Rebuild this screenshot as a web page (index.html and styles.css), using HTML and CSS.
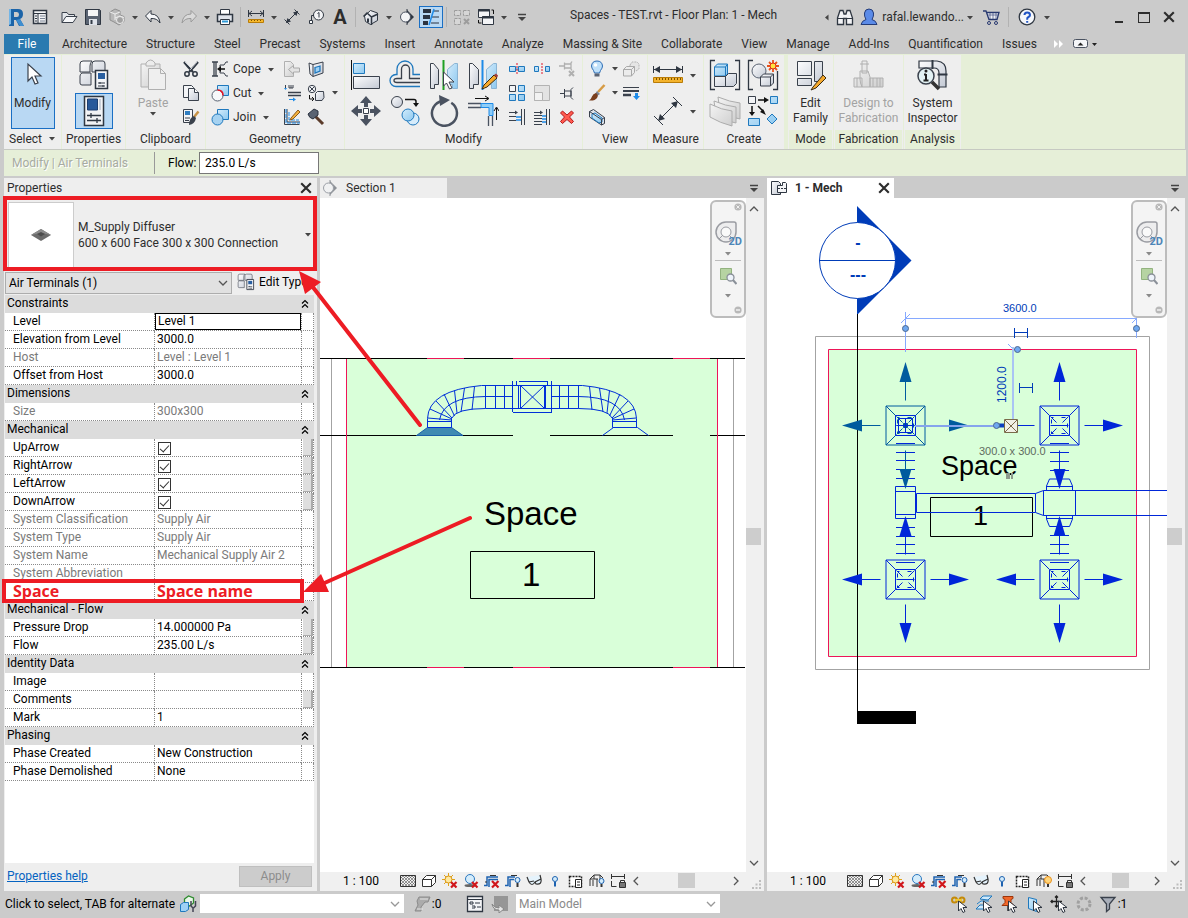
FILE: index.html
```html
<!DOCTYPE html>
<html lang="en">
<head>
    <meta charset="UTF-8">
    <meta name="viewport" content="width=device-width, initial-scale=1.0">
    <title>Spaces - TEST.rvt - Floor Plan: 1 - Mech</title>
    <link rel="stylesheet" href="styles.css">
</head>
<body>

    <!-- icon sprite -->
    <svg class="sprite" aria-hidden="true">
        <defs>
            <linearGradient id="steel" x1="0" y1="0" x2="1" y2="1">
                <stop offset="0" stop-color="#fdfdfe"/>
                <stop offset="1" stop-color="#c3c9d4"/>
            </linearGradient>
            <linearGradient id="sky" x1="0" y1="0" x2="1" y2="1">
                <stop offset="0" stop-color="#d4ecfb"/>
                <stop offset="1" stop-color="#8cc8f0"/>
            </linearGradient>
            <linearGradient id="pale" x1="0" y1="0" x2="1" y2="1">
                <stop offset="0" stop-color="#f4f4f4"/>
                <stop offset="1" stop-color="#cfcfcf"/>
            </linearGradient>
        </defs>

        <!-- quick access, 18x18 -->
        <symbol id="logo" viewBox="0 0 18 18"><path d="M2 1h9q5 0 5 5 0 4-3 5l4 7h-5L9 12H7v6H2z" fill="#1c64a8"/><path d="M7 4h3q2 0 2 2.500t-2 2.500H7z" fill="#cbcbcb"/><path d="M2 1h2v15l-2 1z" fill="#74b5e6"/><path d="M9 12l4 6h4l-4-7z" fill="#3f8ed0"/></symbol>
        <symbol id="home" viewBox="0 0 18 18"><path d="M2.500 2.500h13v13h-13z" fill="#f3f4f6" stroke="#2f3742" stroke-width="1.500"/><path d="M2.500 5.500h13M7 6v9" stroke="#2f3742"/><path d="M4 8h2M4 10.500h2M4 13h2" stroke="#2f3742"/><path d="M9 8h5M9 10.500h5M9 13h5" stroke="#7a8494"/></symbol>
        <symbol id="open" viewBox="0 0 18 18"><path d="M2 14.500V4.500h5l1.500 2h6v2" fill="#e3e6ea" stroke="#3a414c"/><path d="M2 14.500l4-6h11l-4 6z" fill="#f6f7f9" stroke="#3a414c"/></symbol>
        <symbol id="save" viewBox="0 0 18 18"><path d="M1.500 1.500h14l1 1v14h-15z" fill="#5a6372" stroke="#2f3742"/><path d="M4 2h10v6H4z" fill="#f4f5f7"/><path d="M5 11h8v6H5z" fill="#dfe3ea"/><path d="M6.500 12h2v4h-2z" fill="#333b47"/></symbol>
        <symbol id="cloud" viewBox="0 0 18 18"><path d="M7 1l5 2v4l4 1.500v5L11 17l-5-3-4-2V4z" fill="#b9b9b9" stroke="#909090"/><path d="M7 6l5-2M7 6v6M2 4l5 2M7 10l5-2 4 1.500" stroke="#efefef" fill="none"/><circle cx="12" cy="12" r="3.500" fill="#a2a2a2" stroke="#eee"/></symbol>
        <symbol id="undo" viewBox="0 0 18 18"><path d="M7 2.500v3.500q8 0 9 9-3-5-9-4.500V14L1.500 8z" fill="#f5f6f8" stroke="#2f3742"/></symbol>
        <symbol id="redo" viewBox="0 0 18 18"><path d="M11 2.500v3.500q-8 0-9 9 3-5 9-4.500V14l5.500-6z" fill="#dadada" stroke="#9a9a9a"/></symbol>
        <symbol id="print" viewBox="0 0 18 18"><path d="M4.500 7V1.500h9V7" fill="#fff" stroke="#2f3742"/><path d="M1.500 6.500h15v7h-15z" fill="#dfe3ea" stroke="#2f3742" stroke-width="1.500"/><path d="M4.500 11.500h9v5h-9z" fill="#fff" stroke="#2f3742"/><path d="M6 13.500h6" stroke="#2f9ad8" stroke-width="2"/></symbol>
        <symbol id="measure" viewBox="0 0 18 18"><path d="M2 5.500h14M5 3L2 5.500 5 8M13 3l3 2.500L13 8M1.500 2v7M16.500 2v7" fill="none" stroke="#2f3742"/><path d="M1.500 11.500h15v3h-15z" fill="#f7b92c" stroke="#b97c08"/><path d="M4.500 12v1M7.500 12v1M10.500 12v1M13.500 12v1" stroke="#7c5200"/></symbol>
        <symbol id="aligned" viewBox="0 0 18 18"><path d="M3.500 14.500l11-11M1.500 11.500l5 5M11.500 1.500l5 5" stroke="#2f3742" fill="none"/><path d="M3 15l1.500-5L8 13.500zM15 3l-5 1.500L13.500 8z" fill="#2f3742"/></symbol>
        <symbol id="tag" viewBox="0 0 18 18"><circle cx="11.500" cy="7" r="5" fill="#f3f4f6" stroke="#2f3742"/><path d="M10.500 5.500l1.500-1v5M4.500 12V7.500H7" fill="none" stroke="#2f3742"/><path d="M2.500 12.500h3v3h-3z" fill="#fff" stroke="#2f3742"/></symbol>
        <symbol id="house" viewBox="0 0 18 18"><path d="M2.500 8l6-5.500 7 2.500v7.500l-7 4-5-3z" fill="url(#steel)" stroke="#2f3742"/><path d="M1.500 8.500L5 5l4.500 4v8M9.500 9L16 6" fill="none" stroke="#2f3742" stroke-width="1.500"/><path d="M5 10.500h2v4H5z" fill="#2f3742"/></symbol>
        <symbol id="section" viewBox="0 0 18 18"><path d="M9 2l7 7-7 7z" fill="#2f3742"/><circle cx="7.500" cy="9" r="5" fill="#f3f4f6" stroke="#4a5260"/><path d="M9 1v3M9 14v3" stroke="#2f3742"/></symbol>
        <symbol id="thin" viewBox="0 0 18 18"><path d="M1 3h8M1 9h7M1 15h5" stroke="#2b3340" stroke-width="4"/><path d="M11 3h6M10 9h7M9 15h8" stroke="#2b3340"/><path d="M12 1L7 17" stroke="#1e8be8" stroke-width="1.500"/></symbol>
        <symbol id="hidden" viewBox="0 0 18 18"><path d="M1.500 2.500h6v5h-6zM10.500 2.500h6v5h-6zM1.500 10.500h6v6h-6z" fill="#d6d6d6" stroke="#9c9c9c" stroke-dasharray="3 1"/><path d="M11 11l5 5M16 11l-5 5" stroke="#9c9c9c" stroke-width="2"/></symbol>
        <symbol id="switch" viewBox="0 0 18 18"><path d="M1.500 1.500h11v8h-11zM5.500 8.500h11v8h-11z" fill="#f3f4f6" stroke="#2f3742"/><path d="M1 2.500h12M5 9.500h12" stroke="#2f3742" stroke-width="2"/><path d="M14.500 2h2v4M1.500 12v3h3" stroke="#111" fill="none"/></symbol>
        <symbol id="custom" viewBox="0 0 18 18"><path d="M5 6.500h8" stroke="#444" stroke-width="1.500"/><path d="M5 9h8l-4 4z" fill="#444"/></symbol>
        <symbol id="binoc" viewBox="0 0 18 18"><path d="M1.500 10L4 2.500h3L8 6h2l1-3.500h3L16.500 10v6.500h-6v-6h-3v6h-6z" fill="#f2f3f5" stroke="#2f3742" stroke-width="1.300"/><path d="M2 10.500h5M11 10.500h5" stroke="#2f3742"/></symbol>
        <symbol id="user" viewBox="0 0 18 18"><path d="M1 16.500q1-4 5-5Q4 8 4.500 5 5 1 9 1t4.500 4q.500 3-1.500 6.500 4 1 5 5z" fill="#5b8be8" stroke="#243c78"/></symbol>
        <symbol id="cart" viewBox="0 0 18 18"><path d="M1 3h3l3 8.500h8l2-7H5" fill="#eef0f5" stroke="#27386f" stroke-width="1.300"/><circle cx="7" cy="15" r="1.500" fill="none" stroke="#27386f"/><circle cx="14" cy="15" r="1.500" fill="none" stroke="#27386f"/><path d="M6 7h10M8 5v6M11 5v6M14 5v6" stroke="#27386f" stroke-width=".6"/></symbol>
        <symbol id="help" viewBox="0 0 18 18"><circle cx="9" cy="9" r="7.800" fill="#f5f7fb" stroke="#2f3742" stroke-width="1.300"/><path d="M6.500 7q0-2.500 2.700-2.500T12 7q0 1.300-1.500 2T9.200 11v.8M9.200 13v1.800" fill="none" stroke="#2255c4" stroke-width="2"/></symbol>
        <symbol id="down" viewBox="0 0 8 5"><path d="M1 1h6L4 4.500z" fill="#444"/></symbol>
        <symbol id="chev" viewBox="0 0 10 6"><path d="M1 1l4 4 4-4" fill="none" stroke="#555" stroke-width="1.300"/></symbol>
        <symbol id="x" viewBox="0 0 10 10"><path d="M1 1l8 8M9 1L1 9" stroke="#2d2d2d" stroke-width="1.800"/></symbol>

        <!-- ribbon, small -->
        <symbol id="cutout" viewBox="0 0 18 18"><path d="M2 2q4 5 9 10M16 2Q12 7 7 12" stroke="#2f3742" stroke-width="2.200" fill="none"/><path d="M3 2q4 4 7 7M15 2l-7 8" stroke="#dfe3ea" stroke-width=".8"/><circle cx="5" cy="14" r="2.200" fill="none" stroke="#2f3742" stroke-width="1.500"/><circle cx="13" cy="14" r="2.200" fill="none" stroke="#2f3742" stroke-width="1.500"/></symbol>
        <symbol id="copydoc" viewBox="0 0 18 18"><path d="M1.500 1.500h8l2 2v10h-10z" fill="#f4f5f7" stroke="#3a414c"/><path d="M6.500 4.500h6l4 4v8h-10z" fill="url(#steel)" stroke="#3a414c"/><path d="M12.500 4.500v4h4" fill="#fff" stroke="#3a414c"/></symbol>
        <symbol id="matchtype" viewBox="0 0 18 18"><path d="M1.500 1.500h9v13h-9z" fill="#f4f5f7" stroke="#3a414c"/><path d="M3 3h5v4H3z" fill="#2f7dc0"/><path d="M3 10h5M3 12.500h4" stroke="#3a414c"/><path d="M16.500 3.500L12 9" stroke="#c79246" stroke-width="2.500"/><path d="M12 8l2 2q-1 6-7 7 0-7 5-9z" fill="#3a414c"/></symbol>
        <symbol id="cope" viewBox="0 0 18 18"><path d="M1 2h6M1 16h6M3 2v14M5 2v14" stroke="#3a414c" stroke-width="1.300"/><path d="M17 2h-2l-2 3H9v2M17 16h-2l-2-3H9v-2" stroke="#3a414c" fill="none"/><path d="M14 9H8" stroke="#111" stroke-width="1.500"/><path d="M6 9l4-3v6z" fill="#111"/></symbol>
        <symbol id="cutgeo" viewBox="0 0 18 18"><path d="M6.500 1.500h11v10h-11z" fill="url(#sky)" stroke="#1f78bd"/><circle cx="6.500" cy="11.500" r="5.500" fill="#f7f8fa" stroke="#596271"/><path d="M6.500 6q5.500 0 5.500 5.500" stroke="#e81123" stroke-width="1.500" fill="none"/></symbol>
        <symbol id="joingeo" viewBox="0 0 18 18"><path d="M6.500 1.500h11v10h-11z" fill="url(#sky)" stroke="#1f78bd"/><circle cx="6.500" cy="11.500" r="5.500" fill="#a6d2f1" stroke="#1f78bd"/></symbol>
        <symbol id="joinends" viewBox="0 0 18 18"><path d="M1.500 1.500h6l3 3v12h-9z" fill="url(#pale)" stroke="#b0b0b0"/><path d="M5.500 9.500l5-4v2.500h6v4h-6v2z" fill="#e3e3e3" stroke="#a9a9a9"/></symbol>
        <symbol id="walljoin" viewBox="0 0 18 18"><path d="M2 3l4 1.500L16 2v11L6 16.500 3 14z" fill="url(#steel)" stroke="#3a414c"/><path d="M6 4.500v12" stroke="#3a414c" fill="none"/><path d="M8 7.500l5-1.500v5l-5 2z" fill="#9ed1f5" stroke="#1f78bd" stroke-width="1.300"/></symbol>
        <symbol id="beam" viewBox="0 0 18 18"><path d="M2.500 1v4M6 1v3h4V1M8 1v3" stroke="#3a414c" fill="none"/><path d="M1 4l1.500 2L4 4z" fill="#1e8be8"/><path d="M5 8.500h13M5 11.500h13" stroke="#3a414c" stroke-width="1.500"/><path d="M6 15.500h5" stroke="#1e8be8"/><path d="M10 13.500l3 2-3 2z" fill="#1e8be8"/></symbol>
        <symbol id="paint" viewBox="0 0 18 18"><circle cx="5" cy="5" r="3.700" fill="#eef0f3" stroke="#3a414c"/><path d="M2.500 2.500l5 5M7.500 2.500l-5 5" stroke="#3a414c"/><path d="M8.500 9.500l2-2h6l.500 6-2 3h-6.500z" fill="url(#steel)" stroke="#3a414c"/><path d="M2.500 11v4h4M5 13l2 2-2 2" stroke="#111" fill="none"/></symbol>
        <symbol id="wallopen" viewBox="0 0 18 18"><path d="M1.500 1v15.500h15M4 1v13h13" stroke="#3a414c" fill="none"/><path d="M3 1v14h14M6 4v8h10" stroke="#1e8be8" fill="none" stroke-dasharray="4 1"/><path d="M8 10L15 2l2 2-7 7-3 1z" fill="#f3b03c" stroke="#8a5a1c"/></symbol>
        <symbol id="hammer" viewBox="0 0 18 18"><path d="M7 7l9 9" stroke="#5b3b2a" stroke-width="3"/><path d="M1 6l6-5 4 2v4l-5 4q-4-1-5-5z" fill="#5a6372" stroke="#2b3340"/></symbol>
        <symbol id="split" viewBox="0 0 18 18"><path d="M1.500 6.500h6v5h-6zM10.500 6.500h6v5h-6z" fill="url(#sky)" stroke="#1f78bd"/><path d="M7.500 9h3" stroke="#1f78bd"/><path d="M9 3v12" stroke="#e0162b" stroke-dasharray="2 1"/></symbol>
        <symbol id="splitgap" viewBox="0 0 18 18"><path d="M1.500 6.500h4v5h-4zM12.500 6.500h4v5h-4z" fill="url(#sky)" stroke="#1f78bd"/><path d="M9 3v12" stroke="#e0162b" stroke-dasharray="2 1"/></symbol>
        <symbol id="unpin" viewBox="0 0 18 18"><path d="M1 6h5M6.500 2.500v7M7 4h6v4H7M14 1.500L13 3v6l1 1.500" stroke="#b0b0b0" stroke-width="1.300" fill="none"/><path d="M11 11l5 5M16 11l-5 5" stroke="#b0b0b0" stroke-width="2"/></symbol>
        <symbol id="pin" viewBox="0 0 18 18"><path d="M2 9.500h4M6.500 5v9M7 7h6v5H7M15 3.500L13 5.500v8l2 2" stroke="#3a414c" fill="none"/></symbol>
        <symbol id="array" viewBox="0 0 18 18"><path d="M1.500 1.500h6v6h-6z" fill="#f3f4f6" stroke="#3a414c"/><path d="M10.500 1.500h6v6h-6zM1.500 10.500h6v6h-6zM10.500 10.500h6v6h-6z" fill="url(#sky)" stroke="#1f78bd"/></symbol>
        <symbol id="scale" viewBox="0 0 18 18"><path d="M1.500 1.500h15v15h-15z" fill="#e3e3e3" stroke="#b3b3b3"/><path d="M1.500 8.500h8v8h-8z" fill="#f2f2f2" stroke="#b3b3b3"/></symbol>
        <symbol id="trim1" viewBox="0 0 18 18"><path d="M1 8.500h7M1 12.500h7M13.500 1v16M16.500 1v16" stroke="#3a414c"/><path d="M8 9h5M8 12h5" stroke="#1e8be8" stroke-width="1.500"/><path d="M1 4.500h7" stroke="#3a414c"/><path d="M7 2.500l3 2-3 2z" fill="#3a414c"/></symbol>
        <symbol id="trim2" viewBox="0 0 18 18"><path d="M1 7.500h8M1 10.500h8M1 13.500h8M1 16.500h8M13.500 1v16M16.500 1v16" stroke="#3a414c"/><path d="M9 8h4M9 11h4M9 14h4" stroke="#1e8be8" stroke-width="1.500"/><path d="M1 4.500h7" stroke="#3a414c"/><path d="M7 2.500l3 2-3 2z" fill="#3a414c"/></symbol>
        <symbol id="delete" viewBox="0 0 18 18"><path d="M4.500 3L9 7l4.500-4 2 2-4 4 4 4.500-2 2L9 11.500l-4.500 4-2-2L6.500 9l-4-4z" fill="#ff5a4e" stroke="#b3171b"/></symbol>
        <symbol id="bulb" viewBox="0 0 18 18"><path d="M9 1q5 0 5.500 5 0 2-2 4.500L11.500 13h-5L5.500 10.500Q3.500 8 3.500 6 4 1 9 1z" fill="#bfe0fa" stroke="#2c6cb4"/><path d="M6.500 13.500h5v3h-5z" fill="#5a6372"/><circle cx="7.500" cy="5" r="1.800" fill="#fff"/></symbol>
        <symbol id="brush" viewBox="0 0 18 18"><path d="M16.500 1L10 8" stroke="#d69b45" stroke-width="2.500"/><path d="M9 7l3 3-3 2-2-2z" fill="#7b8492"/><path d="M8 9q3 2 1 5-2 3-8 2.500 2-1 3-4t4-3.500z" fill="#7b3f1d"/></symbol>
        <symbol id="box3" viewBox="0 0 18 18"><path d="M8 5l2-3h5l2 2v5l-3 2H8z" fill="#e5e5e5" stroke="#b3b3b3" stroke-dasharray="2 1"/><path d="M1.500 9.500l3-3h8v6l-3 3.500h-8zM1.500 9.500h8V16M9.500 9.500l3-3" fill="#ececec" stroke="#a9a9a9"/></symbol>
        <symbol id="lw" viewBox="0 0 18 18"><path d="M1 3.500h16" stroke="#3a414c"/><path d="M1 7h16" stroke="#3a414c" stroke-width="2"/><path d="M1 11h8" stroke="#3a414c" stroke-width="2.500"/><path d="M11 12h2V9h3v3h2l-3.500 4z" fill="#1e8be8"/></symbol>
        <symbol id="secbox" viewBox="0 0 18 18"><path d="M1.500 3.500l4-2 11 8v6l-3 1.500-12-8z" fill="#dfe3ea" stroke="#3a414c"/><path d="M4 6l3-1 7 5v4l-3 1-7-5z" fill="url(#sky)" stroke="#1f78bd"/><path d="M1.500 3.500l12 8v5.500M13.500 11.500l3-2" stroke="#3a414c" fill="none"/></symbol>

        <!-- ribbon, large -->
        <symbol id="cursor" viewBox="0 0 32 32"><path d="M11 5v17l4-4 3 7 3-1-3-7h6z" fill="#fff" stroke="#3a414c" stroke-width="1.200"/></symbol>
        <symbol id="typeprops" viewBox="0 0 32 32"><g fill="url(#steel)" stroke="#3a414c"><path d="M2 5q0-3 3-3h9q-2 2-2 5v6H2zM14 5q0-3 3-3h8q2 0 2 3v8H14zM2 17q0-2 2-3h9v12H4q-2 0-2-2z"/></g><path d="M17.500 11.500h12v18h-12z" fill="#f5f6f8" stroke="#2f3742" stroke-width="1.500"/><path d="M20 14h7v6h-7z" fill="#2a5fa0"/><path d="M20 24h7M20 27h7M22 23v2M25 26v2" stroke="#2f3742"/></symbol>
        <symbol id="props" viewBox="0 0 32 32"><path d="M6.500 1.500h19v29h-19z" fill="#f2f3f5" stroke="#2f3742" stroke-width="1.500"/><path d="M9.500 4h10v11h-10z" fill="#28599a" stroke="#1d3f70"/><path d="M21 4h2v11h-2z" fill="#c9cfd8"/><path d="M9 20.500h14M9 25.500h14M13 18v5M19 23v5" stroke="#2f3742" stroke-width="1.300"/></symbol>
        <symbol id="paste" viewBox="0 0 32 32"><path d="M4 5h19v23H4z" fill="url(#pale)" stroke="#b0b0b0"/><path d="M9 7V4q2-3 4.500-3T18 4v3z" fill="#ececec" stroke="#b0b0b0"/><path d="M11.500 9.500h12l5 5v16h-17z" fill="#efefef" stroke="#b0b0b0"/><path d="M23.500 9.500v5h5" fill="none" stroke="#b0b0b0"/></symbol>
        <symbol id="align" viewBox="0 0 32 32"><path d="M1.500 1v30" stroke="#111"/><path d="M3.500 4.500h11v10h-11z" fill="url(#sky)" stroke="#1f78bd"/><path d="M3.500 17.500h26v12h-26z" fill="url(#steel)" stroke="#3a414c"/></symbol>
        <symbol id="offset" viewBox="0 0 32 32"><path d="M31 15.500h-7V10a8 8 0 0 0-16 0v5.500H7a6 6 0 0 0 0 12h24" fill="none" stroke="#1f78bd" stroke-width="1.300"/><path d="M31 19.500H20.500V10a4 4 0 0 0-8 0v9.500H8q-3 0-3 2t3 2h23" fill="none" stroke="#3a414c" stroke-width="1.300"/></symbol>
        <symbol id="mirrorpick" viewBox="0 0 32 32"><path d="M2.500 4.500h3l5 6v15h-4v4h-4z" fill="url(#steel)" stroke="#3a414c"/><path d="M29.500 4.500h-3l-7 6v15h5v4h5z" fill="url(#sky)" stroke="#8bb4d4"/><path d="M15.500 1v30" stroke="#1fa022" stroke-width="2"/><path d="M15.500 13v14l3-3 3 6 2.500-1-3-6h5z" fill="#fff" stroke="#3a414c"/></symbol>
        <symbol id="mirrordraw" viewBox="0 0 32 32"><path d="M2.500 4.500h3l6 6v15h-5v4h-4z" fill="url(#steel)" stroke="#3a414c"/><path d="M29.500 4.500h-3l-7 6v15h5v4h5z" fill="url(#sky)" stroke="#8bb4d4"/><path d="M15.500 1v30" stroke="#1e8be8" stroke-width="2"/><path d="M17 26L27 16l3 3-10 9-5 2z" fill="#f6a92c" stroke="#3a2a12"/><path d="M27 16l2-1.500 2 2-1 2.500z" fill="#a13f3f"/></symbol>
        <symbol id="move" viewBox="0 0 32 32"><path d="M16 1l6 7h-4v4h-4V8h-4zM16 31l6-7h-4v-4h-4v4h-4zM1 16l7-6v4h4v4H8v4zM31 16l-7-6v4h-4v4h4v4z" fill="#4a5260"/><path d="M13.500 13.500h5v5h-5z" fill="#fff" stroke="#3a414c"/></symbol>
        <symbol id="copy" viewBox="0 0 32 32"><circle cx="8" cy="7" r="5.500" fill="url(#steel)" stroke="#3a414c"/><path d="M16 4.500h9q2 0 2 2V9" fill="none" stroke="#111" stroke-width="1.500"/><path d="M24 8h6l-3 4z" fill="#111"/><circle cx="24" cy="24" r="6" fill="#d6ecfb" stroke="#1f78bd"/><circle cx="19" cy="20" r="6" fill="url(#sky)" stroke="#1f78bd"/></symbol>
        <symbol id="rotate" viewBox="0 0 32 32"><path d="M21 6.500a12.500 12.500 0 1 1-9 0" fill="none" stroke="#4a5260" stroke-width="2.500" transform="rotate(12 16 18)"/><path d="M11 0l11 5-10 6z" fill="#4a5260"/></symbol>
        <symbol id="trimcorner" viewBox="0 0 32 32"><path d="M1 8.500h13M1 12.500h13M21.500 21v10M25.500 21v10" stroke="#4a5260" stroke-width="1.300"/><path d="M14 8.500h12v12h-4v-8h-8z" fill="#8fcdf7" stroke="#1e8be8"/><path d="M8 3.500h13M29.500 25V13" stroke="#111" fill="none"/><path d="M18 1l4 2.500L18 6M27 16l2.500-4 2.500 4" stroke="#111" fill="none"/></symbol>
        <symbol id="dimh" viewBox="0 0 32 32"><path d="M2 10.500h28M1.500 7v7M30.500 7v7" stroke="#2f3742"/><path d="M2 10.500l6-3.500v7zM30 10.500L24 7v7z" fill="#2f3742"/><path d="M1.500 18.500h29v5h-29z" fill="#f4b32c" stroke="#b97c08"/><path d="M4.500 19v2M7.500 19v2M10.500 19v2M13.500 19v2M16.500 19v2M19.500 19v2M22.500 19v2M25.500 19v2M28.500 19v2" stroke="#7c5200"/></symbol>
        <symbol id="dimd" viewBox="0 0 32 32"><path d="M6.500 25.500l19-19M2 21l9 9M21 2l9 9" stroke="#2f3742" fill="none"/><path d="M6 26l2-7 5 5zM26 6l-7 2 5 5z" fill="#2f3742"/></symbol>
        <symbol id="similar" viewBox="0 0 32 32"><path d="M6 1.500H1.500v29H6M26 1.500h4.500v29H26" fill="none" stroke="#2f3742" stroke-width="1.300"/><path d="M5.500 8l3-3h10v10l-2 2h-11z" fill="url(#sky)" stroke="#1f78bd"/><path d="M5.500 8h11v9M16.500 8l2-3" fill="none" stroke="#1f78bd"/><path d="M5.500 17.500h11v10h-11zM16.500 17.500l3-3h8v10l-3 3h-8z" fill="url(#steel)" stroke="#3a414c"/></symbol>
        <symbol id="group" viewBox="0 0 32 32"><path d="M6 1.500H1.500v29H6M26 30.500h4.500V12" fill="none" stroke="#2f3742" stroke-width="1.300"/><circle cx="12" cy="12" r="7" fill="url(#steel)" stroke="#596271"/><path d="M13.500 18l3-3h10v9l-3 3h-10zM13.500 18h10v9M23.500 18l3-3" fill="url(#steel)" stroke="#3a414c"/><path d="M26 1v12M20 7h12M22 3l8 8M30 3l-8 8" stroke="#e8531a" stroke-width="1.800"/><circle cx="26" cy="7" r="3" fill="#ffe23d" stroke="#e02a1a"/></symbol>
        <symbol id="assembly" viewBox="0 0 32 32"><g fill="url(#pale)" stroke="#acacac"><path d="M9 2q12 5 22 6v16q-12-2-20-7z"/><path d="M5 6q12 5 22 6v16q-12-2-20-7z"/><path d="M1 9q12 6 22 7v15Q11 28 1 22z"/></g></symbol>
        <symbol id="parts" viewBox="0 0 32 32"><path d="M1.500 1.500h7v7h-7z" fill="#f3f4f6" stroke="#3a414c"/><path d="M23.500 1.500h7v7h-7zM1.500 23.500h11v7h-11zM25 19l5 5-5 5-5-5z" fill="url(#sky)" stroke="#1f78bd"/><path d="M11 5h7M5 11v7M11 11l6 6" stroke="#111" stroke-width="1.500"/><path d="M17 2l5 3-5 3zM2 17h6l-3 4zM13 17l6 3-3-6z" fill="#111"/></symbol>
        <symbol id="editfam" viewBox="0 0 32 32"><path d="M2.500 2.500h14v14h-14zM19.500 2.500h8v20h-8zM2.500 19.500h14v7h-14z" fill="url(#steel)" stroke="#3a414c"/><path d="M18 28L28 16l3 3-10 10-5 2z" fill="#f6a92c" stroke="#3a2a12"/></symbol>
        <symbol id="fab" viewBox="0 0 32 32"><path d="M9 2h5v12H9zM7 12h8l2 6v10H9q-2-4-2-8zM1 19h8v9H1zM17 19h13v9H17z" fill="url(#pale)" stroke="#b0b0b0"/><path d="M20 19v9M24 19v9M27 19v9M4 19v9M7 5h9" stroke="#b0b0b0"/></symbol>
        <symbol id="inspector" viewBox="0 0 32 32"><path d="M2 2h18q9 1 9 10v16h-7V14q0-5-5-5H2z" fill="url(#steel)" stroke="#2f3742" stroke-width="1.200"/><path d="M15.500 1v9M20.500 15.500h10" stroke="#2f3742" stroke-width="2"/><circle cx="9" cy="17" r="8" fill="#e3f2f4" stroke="#3a414c" stroke-width="1.500"/><path d="M15 23l7 7" stroke="#333" stroke-width="3.500"/><path d="M9 15v7M7 15.500h2M6.500 21.500h5" stroke="#222" stroke-width="2"/><circle cx="9" cy="12" r="1.500" fill="#222"/></symbol>

        <!-- view controls and status bar, 16x16 -->
        <pattern id="grid" width="3" height="3" patternUnits="userSpaceOnUse"><path d="M0 0l3 3M3 0L0 3" stroke="#555" stroke-width=".6"/></pattern>
        <symbol id="v-detail" viewBox="0 0 16 16"><path d="M.5 2.500h15v11H.5z" fill="url(#grid)" stroke="#333"/></symbol>
        <symbol id="v-style" viewBox="0 0 16 16"><path d="M1.500 6.500l4-4h9v7l-4 4h-9zM1.500 6.500h9v7M10.500 6.500l4-4" fill="#fff" stroke="#333"/></symbol>
        <symbol id="v-sun" viewBox="0 0 16 16"><path d="M6.500 0v13M0 6.500h13M2 2l9 9M11 2l-9 9" stroke="#e0a31c"/><circle cx="6.500" cy="6.500" r="3.500" fill="#ffe9a0" stroke="#d99612"/><path d="M9 9l5.500 5.500M14.500 9L9 14.500" stroke="#d0161b" stroke-width="2.200"/></symbol>
        <symbol id="v-shadow" viewBox="0 0 16 16"><ellipse cx="7" cy="12.500" rx="5.500" ry="1.500" fill="#666"/><circle cx="7" cy="6" r="4.500" fill="#d4ecfb" stroke="#2a78c0"/><path d="M9 9l5.500 5.500M14.500 9L9 14.500" stroke="#d0161b" stroke-width="2.200"/></symbol>
        <symbol id="v-crop" viewBox="0 0 16 16"><path d="M0 12.500h3V4h11M5 14V6.500h9" fill="none" stroke="#1d62b0" stroke-width="1.500"/><path d="M6 2.500h6M1 9h2" stroke="#333"/><path d="M8 8l6.500 6.500M14.500 8L8 14.500" stroke="#d0161b" stroke-width="2.200"/></symbol>
        <symbol id="v-cropshow" viewBox="0 0 16 16"><path d="M0 12.500h3V4h7M5 14V6.500h4" fill="none" stroke="#1d62b0" stroke-width="1.500"/><path d="M6 2.500h6" stroke="#333"/><circle cx="12.500" cy="7" r="2.500" fill="#d4ecfb" stroke="#1d62b0"/><path d="M12.500 10v4" stroke="#333" stroke-width="2"/></symbol>
        <symbol id="v-glasses" viewBox="0 0 16 16"><path d="M1 4l2 5q3 5 6 0l6-3-1-4M15 6q1 6-5 5L9 9M3 9L8 8" fill="#e5f3fc" stroke="#333" stroke-width="1.200"/></symbol>
        <symbol id="v-reveal" viewBox="0 0 16 16"><circle cx="8" cy="6" r="2.500" fill="#d4ecfb" stroke="#1d62b0"/><path d="M8 9v4.500" stroke="#1d62b0" stroke-width="2"/></symbol>
        <symbol id="v-props" viewBox="0 0 16 16"><path d="M1.500 3.500h12v10h-12z" fill="#fff" stroke="#222" stroke-dasharray="2 1" stroke-width="1.500"/><path d="M7.500 6.500h6v8h-6z" fill="#fff" stroke="#222"/><path d="M9 9h3M9 12h3" stroke="#222"/></symbol>
        <symbol id="v-analytic" viewBox="0 0 16 16"><path d="M1 13V6l4-4h6l3 3M4 13V7M8 14V6M1 6h8M5 2v4M11 2v5" fill="none" stroke="#333"/><circle cx="12.500" cy="8" r="2.500" fill="#d4ecfb" stroke="#1d62b0"/><path d="M12.500 11v3" stroke="#333" stroke-width="2"/></symbol>
        <symbol id="v-lit" viewBox="0 0 16 16"><path d="M1 13V6l4-4h6l3 3M4 13V7M8 14V6M1 6h8M5 2v4" fill="none" stroke="#333"/><circle cx="12" cy="7" r="3.500" fill="#ffd479" stroke="#e8901c"/><path d="M12 11v3" stroke="#333" stroke-width="2"/></symbol>
        <symbol id="v-lock" viewBox="0 0 16 16"><path d="M1 3.500h14M1.500 1v5M14.500 1v5M1.500 8v5.500h5" fill="none" stroke="#333"/><path d="M9.500 9.500h6v5h-6z" fill="#777" stroke="#333"/><path d="M10.500 9V7.500h4V9" fill="none" stroke="#333"/></symbol>
        <symbol id="s-work" viewBox="0 0 18 18"><path d="M5.500 4l4-3 5 2v5l-4 3-5-2z" fill="#eaf6ea" stroke="#2e8b2e" stroke-width="1.300"/><path d="M1.500 9.500l3-2h5v7l-3 2h-5z" fill="#9ed1f5" stroke="#1f78bd"/><path d="M12 6v5l2 2v4M16.500 6v5l-2 2" fill="none" stroke="#445" stroke-width="1.500"/></symbol>
        <symbol id="s-edit" viewBox="0 0 18 18"><path d="M6 2h11l-2 5h-3l-4 5v4H2l3-6-1-4z" fill="#ababab" stroke="#8a8a8a"/><path d="M7 4h8M4 14h6" stroke="#e5e5e5"/></symbol>
        <symbol id="s-opt" viewBox="0 0 18 18"><path d="M1.500 1.500h15v15h-15z" fill="#f4f5f7" stroke="#2f3742" stroke-width="1.300"/><path d="M1.500 4.500h15M4 7h3v2H4zM6 11h3v2H6M9 8h5M11 12h4" stroke="#2f3742" fill="none"/></symbol>
        <symbol id="s-add" viewBox="0 0 18 18"><path d="M3 1h14v15H3z" fill="#969696"/><path d="M1 9q2 4 7 4v-3l5 4-5 4v-3Q2 15 1 9z" fill="#e4e4e4" stroke="#888"/></symbol>
        <symbol id="arrowtip" viewBox="0 0 18 18"><path d="M8.500 6v10l2.500-2.500 2 4 2-1-2-4h4z" fill="#fff" stroke="#2f3742"/></symbol>
        <symbol id="s-link" viewBox="0 0 18 18"><circle cx="4.500" cy="5" r="2.500" fill="none" stroke="#c48a08" stroke-width="2"/><circle cx="12" cy="5" r="2.500" fill="none" stroke="#c48a08" stroke-width="2"/><path d="M5 5h7" stroke="#f3c72c" stroke-width="2"/><use href="#arrowtip"/></symbol>
        <symbol id="s-under" viewBox="0 0 18 18"><path d="M5 4l3-3h9l-4 4zM2 9l4-3h8M1 14l4-4h8l-3 4z" fill="#cfe9fb" stroke="#1f78bd"/><use href="#arrowtip"/></symbol>
        <symbol id="s-pin" viewBox="0 0 18 18"><path d="M3 1.500h10v2l-2 1v3l3 3H2l3-3v-3l-2-1z" fill="#f0672a" stroke="#9c3409"/><path d="M8 11v5" stroke="#333" stroke-width="1.500"/><use href="#arrowtip"/></symbol>
        <symbol id="s-face" viewBox="0 0 18 18"><path d="M3.500 2.500l8 2v12l-8-3z" fill="url(#sky)" stroke="#1f78bd"/><use href="#arrowtip"/></symbol>
        <symbol id="s-drag" viewBox="0 0 18 18"><path d="M6.500 1v11M1 6.500h11M5 2.500L6.500 1 8 2.500M5 10.500L6.500 12 8 10.500M2.500 5L1 6.500 2.500 8" stroke="#222" stroke-width="1.300" fill="none"/><use href="#arrowtip"/></symbol>
        <symbol id="s-busy" viewBox="0 0 18 18"><circle cx="9" cy="9" r="6" fill="none" stroke="#a0a0a0" stroke-width="3" stroke-dasharray="3 1.700"/></symbol>
        <symbol id="s-filter" viewBox="0 0 18 18"><path d="M2 2.500h14L10.500 9v5l-3 2.500V9z" fill="#a9afba" stroke="#3a414c" stroke-width="1.300"/></symbol>
        <symbol id="sheet" viewBox="0 0 18 18"><path d="M1.500 2.500h7l2 2v11h-9z" fill="url(#steel)" stroke="#2f3742"/><path d="M7.500 6.500h5v-3h3l1 1v9h-9z" fill="#f4f5f7" stroke="#2f3742"/><path d="M8 9.500h8" stroke="#2f3742" stroke-dasharray="2 1"/></symbol>
        <symbol id="wheel" viewBox="0 0 28 28"><path d="M12 2h8q2 0 2 2v8a10 10 0 1 1-10-10z" fill="#ededee" stroke="#9a9ca2" stroke-width="1.500"/><circle cx="12" cy="12" r="5" fill="#fafafa" stroke="#9a9ca2"/><path d="M5 19l4-4M19 19l-4-4" stroke="#9a9ca2"/></symbol>
        <symbol id="zoomreg" viewBox="0 0 18 18"><path d="M1.500 1.500h11v11h-11z" fill="#b6d3a2" stroke="#93b37f"/><circle cx="11.500" cy="10.500" r="3.500" fill="#eef3fa" stroke="#8a9099" stroke-width="1.300"/><path d="M14 13l3.500 4" stroke="#8a9099" stroke-width="2"/></symbol>
        <symbol id="knob" viewBox="0 0 10 10"><circle cx="5" cy="5" r="4.500" fill="#b8b8b8"/><path d="M3 3l4 4M7 3L3 7" stroke="#fff"/></symbol>
        <symbol id="knob2" viewBox="0 0 10 10"><circle cx="5" cy="5" r="4.500" fill="#b8b8b8"/><path d="M2.500 5h5" stroke="#fff" stroke-width="1.500"/></symbol>
        <symbol id="fold" viewBox="0 0 8 10"><path d="M1 4.500L4 1.500l3 3M1 8.500l3-3 3 3" fill="none" stroke="#000" stroke-width="1.200"/></symbol>
        <symbol id="grip" viewBox="0 0 10 10"><path d="M8 1h2v2H8zM8 4.500h2v2H8zM8 8h2v2H8zM4.500 4.500h2v2h-2zM4.500 8h2v2h-2zM1 8h2v2H1z" fill="#bdbdbd"/></symbol>

        <!-- duct parts -->
        <g id="airArrow"><path d="M0-25V-44" fill="none"/><path d="M0-63.500L6-43.500H-6z" stroke="none"/></g>
        <g id="diffuser" fill="none"><path d="M-19.500-19.500h39v39h-39zM-10-10h20v20h-20zM-19.500-19.500l9.500 9.500M19.500-19.500L10-10M-19.500 19.500L-10 10M19.500 19.500L10 10M-9 0H9"/><path d="M-9-9l6 6M9-9l-6 6M-9 9l6-6M9 9L3 3"/><path d="M-8-8H8V8H-8z" stroke-dasharray="4 8" stroke-dashoffset="2"/></g>
        <g id="flexSection" fill="none">
            <path d="M427.500 427.500v-9q1-28 54-33H513M451.500 427.500v-9q4-10 34-10H513M439.500 420q4-23 46-23.500H513M427.500 421.500h24M427.500 427.500h24"/>
            <path d="M427.700 418l24 2M430 409l22 10M436 401l16 17M444 394l10.500 22M454.500 390.500L457 413M464.500 388l-3.500 24M474.500 386.500L472 410M485.500 385.500v23M495.500 385.500v23M504.500 385.500v23"/>
            <path d="M512.500 381v31M516.500 381v4M518.500 385v23"/>
        </g>
    </svg>

    <div class="app">

        <header class="titlebar">
            <div class="quick">
                <button class="qbtn" aria-label="Revit"><svg class="ic logo"><use href="#logo"/></svg></button>
                <button class="qbtn" aria-label="Home"><svg class="ic"><use href="#home"/></svg></button>
                <button class="qbtn spaced" aria-label="Open"><svg class="ic"><use href="#open"/></svg></button>
                <button class="qbtn" aria-label="Save"><svg class="ic"><use href="#save"/></svg></button>
                <button class="qbtn" aria-label="Synchronize"><svg class="ic"><use href="#cloud"/></svg></button>
                <button class="drop" aria-label="Synchronize options"><svg><use href="#down"/></svg></button>
                <button class="qbtn" aria-label="Undo"><svg class="ic"><use href="#undo"/></svg></button>
                <button class="drop" aria-label="Undo list"><svg><use href="#down"/></svg></button>
                <button class="qbtn" aria-label="Redo"><svg class="ic"><use href="#redo"/></svg></button>
                <button class="drop" aria-label="Redo list"><svg><use href="#down"/></svg></button>
                <button class="qbtn" aria-label="Print"><svg class="ic"><use href="#print"/></svg></button>
                <span class="sep"></span>
                <button class="qbtn" aria-label="Measure"><svg class="ic"><use href="#measure"/></svg></button>
                <button class="drop" aria-label="Measure options"><svg><use href="#down"/></svg></button>
                <button class="qbtn" aria-label="Aligned dimension"><svg class="ic"><use href="#aligned"/></svg></button>
                <button class="qbtn" aria-label="Tag"><svg class="ic"><use href="#tag"/></svg></button>
                <button class="qbtn letter">A</button>
                <span class="sep"></span>
                <button class="qbtn" aria-label="3D view"><svg class="ic"><use href="#house"/></svg></button>
                <button class="drop" aria-label="3D view options"><svg><use href="#down"/></svg></button>
                <button class="qbtn" aria-label="Section"><svg class="ic"><use href="#section"/></svg></button>
                <button class="qbtn on" aria-label="Thin lines"><svg class="ic"><use href="#thin"/></svg></button>
                <span class="sep"></span>
                <button class="qbtn" aria-label="Close hidden"><svg class="ic"><use href="#hidden"/></svg></button>
                <button class="qbtn" aria-label="Switch windows"><svg class="ic"><use href="#switch"/></svg></button>
                <button class="drop" aria-label="Window list"><svg><use href="#down"/></svg></button>
                <button class="qbtn" aria-label="Customize"><svg class="ic"><use href="#custom"/></svg></button>
            </div>
            <h1 class="doc-title">Spaces - TEST.rvt - Floor Plan: 1 - Mech</h1>
            <div class="account">
                <button class="drop turned" aria-label="Collapse search"><svg><use href="#down"/></svg></button>
                <button class="qbtn" aria-label="Search"><svg class="ic"><use href="#binoc"/></svg></button>
                <button class="user"><svg class="ic"><use href="#user"/></svg>rafal.lewando...</button>
                <button class="drop" aria-label="Account menu"><svg><use href="#down"/></svg></button>
                <button class="qbtn wide" aria-label="Store"><svg class="ic"><use href="#cart"/></svg></button>
                <span class="sep"></span>
                <button class="qbtn wide" aria-label="Help"><svg class="ic"><use href="#help"/></svg></button>
                <button class="drop" aria-label="Help menu"><svg><use href="#down"/></svg></button>
            </div>
            <div class="window-btns">
                <button aria-label="Minimize"><span class="min"></span></button>
                <button aria-label="Maximize"><span class="max"></span></button>
                <button aria-label="Close"><svg class="cross"><use href="#x"/></svg></button>
            </div>
        </header>

        <nav class="tabs">
            <button class="file">File</button>
            <button>Architecture</button>
            <button>Structure</button>
            <button>Steel</button>
            <button>Precast</button>
            <button>Systems</button>
            <button>Insert</button>
            <button>Annotate</button>
            <button>Analyze</button>
            <button>Massing &amp; Site</button>
            <button>Collaborate</button>
            <button>View</button>
            <button>Manage</button>
            <button>Add-Ins</button>
            <button>Quantification</button>
            <button>Issues</button>
            <button class="tab-tool" aria-label="More tabs"><svg width="12" height="8"><path d="M1 0l4 4-4 4zM6 0l4 4-4 4z" fill="#fff"/></svg></button>
            <button class="tab-tool" aria-label="Minimize ribbon"><svg width="28" height="10"><rect x="1.500" y=".5" width="14" height="8" rx="2" fill="#f5f6f8" stroke="#4a5260"/><path d="M5.500 6.500h6l-3-3zM20 4h5l-2.500 3z" fill="#222"/></svg></button>
        </nav>

        <div class="ribbon">
            <section class="panel">
                <div class="panel-body centered">
                    <button class="tall on"><svg class="big"><use href="#cursor"/></svg>Modify</button>
                </div>
                <h2>Select <svg class="tri"><use href="#down"/></svg></h2>
            </section>
            <section class="panel">
                <div class="panel-body stack">
                    <button class="cell" aria-label="Type properties"><svg class="big"><use href="#typeprops"/></svg></button>
                    <button class="cell on" aria-label="Properties"><svg class="big"><use href="#props"/></svg></button>
                </div>
                <h2>Properties</h2>
            </section>
            <section class="panel">
                <div class="panel-body clip">
                    <button class="tall off"><svg class="big"><use href="#paste"/></svg>Paste<svg class="tri"><use href="#down"/></svg></button>
                    <button class="small" aria-label="Cut to clipboard"><svg class="ic"><use href="#cutout"/></svg></button>
                    <button class="small" aria-label="Copy to clipboard"><svg class="ic"><use href="#copydoc"/></svg></button>
                    <button class="small" aria-label="Match type"><svg class="ic"><use href="#matchtype"/></svg></button>
                </div>
                <h2>Clipboard</h2>
            </section>
            <section class="panel">
                <div class="panel-body geo">
                    <button class="labelled"><svg class="ic"><use href="#cope"/></svg>Cope<svg class="tri"><use href="#down"/></svg></button>
                    <button class="small" aria-label="Join ends"><svg class="ic"><use href="#joinends"/></svg></button>
                    <button class="small" aria-label="Split face"><svg class="ic"><use href="#walljoin"/></svg></button>
                    <span></span>
                    <button class="labelled"><svg class="ic"><use href="#cutgeo"/></svg>Cut<svg class="tri"><use href="#down"/></svg></button>
                    <button class="small" aria-label="Beam joins"><svg class="ic"><use href="#beam"/></svg></button>
                    <button class="small" aria-label="Paint"><svg class="ic"><use href="#paint"/></svg></button>
                    <button class="drop" aria-label="Paint options"><svg><use href="#down"/></svg></button>
                    <button class="labelled"><svg class="ic"><use href="#joingeo"/></svg>Join<svg class="tri"><use href="#down"/></svg></button>
                    <button class="small" aria-label="Wall joins"><svg class="ic"><use href="#wallopen"/></svg></button>
                    <button class="small" aria-label="Demolish"><svg class="ic"><use href="#hammer"/></svg></button>
                </div>
                <h2>Geometry</h2>
            </section>
            <section class="panel">
                <div class="panel-body mod">
                    <div class="mod-big">
                        <button class="cell" aria-label="Align"><svg class="big"><use href="#align"/></svg></button>
                        <button class="cell" aria-label="Offset"><svg class="big"><use href="#offset"/></svg></button>
                        <button class="cell" aria-label="Mirror, pick axis"><svg class="big"><use href="#mirrorpick"/></svg></button>
                        <button class="cell" aria-label="Mirror, draw axis"><svg class="big"><use href="#mirrordraw"/></svg></button>
                        <button class="cell" aria-label="Move"><svg class="big"><use href="#move"/></svg></button>
                        <button class="cell" aria-label="Copy"><svg class="big"><use href="#copy"/></svg></button>
                        <button class="cell" aria-label="Rotate"><svg class="big"><use href="#rotate"/></svg></button>
                        <button class="cell" aria-label="Trim to corner"><svg class="big"><use href="#trimcorner"/></svg></button>
                    </div>
                    <div class="mod-small">
                        <button class="small" aria-label="Split"><svg class="ic"><use href="#split"/></svg></button>
                        <button class="small" aria-label="Split with gap"><svg class="ic"><use href="#splitgap"/></svg></button>
                        <button class="small" aria-label="Unpin"><svg class="ic"><use href="#unpin"/></svg></button>
                        <button class="small" aria-label="Array"><svg class="ic"><use href="#array"/></svg></button>
                        <button class="small" aria-label="Scale"><svg class="ic"><use href="#scale"/></svg></button>
                        <button class="small" aria-label="Pin"><svg class="ic"><use href="#pin"/></svg></button>
                        <button class="small" aria-label="Trim single"><svg class="ic"><use href="#trim1"/></svg></button>
                        <button class="small" aria-label="Trim multiple"><svg class="ic"><use href="#trim2"/></svg></button>
                        <button class="small" aria-label="Delete"><svg class="ic"><use href="#delete"/></svg></button>
                    </div>
                </div>
                <h2>Modify</h2>
            </section>
            <section class="panel">
                <div class="panel-body viewp">
                    <button class="small" aria-label="Hide in view"><svg class="ic"><use href="#bulb"/></svg></button>
                    <button class="drop" aria-label="Hide options"><svg><use href="#down"/></svg></button>
                    <button class="small" aria-label="Displace"><svg class="ic"><use href="#box3"/></svg></button>
                    <button class="small" aria-label="Override graphics"><svg class="ic"><use href="#brush"/></svg></button>
                    <button class="drop" aria-label="Override options"><svg><use href="#down"/></svg></button>
                    <button class="small" aria-label="Linework"><svg class="ic"><use href="#lw"/></svg></button>
                    <button class="small" aria-label="Selection box"><svg class="ic"><use href="#secbox"/></svg></button>
                </div>
                <h2>View</h2>
            </section>
            <section class="panel">
                <div class="panel-body meas">
                    <button class="cell" aria-label="Measure"><svg class="big"><use href="#dimh"/></svg></button>
                    <button class="drop" aria-label="Measure options"><svg><use href="#down"/></svg></button>
                    <button class="cell" aria-label="Dimension"><svg class="big"><use href="#dimd"/></svg></button>
                    <button class="drop" aria-label="Dimension options"><svg><use href="#down"/></svg></button>
                </div>
                <h2>Measure</h2>
            </section>
            <section class="panel">
                <div class="panel-body crea">
                    <button class="cell" aria-label="Create similar"><svg class="big"><use href="#similar"/></svg></button>
                    <button class="cell" aria-label="Create group"><svg class="big"><use href="#group"/></svg></button>
                    <button class="cell" aria-label="Create assembly"><svg class="big"><use href="#assembly"/></svg></button>
                    <button class="cell" aria-label="Create parts"><svg class="big"><use href="#parts"/></svg></button>
                </div>
                <h2>Create</h2>
            </section>
            <section class="panel context first">
                <div class="panel-body centered">
                    <button class="tall"><svg class="big"><use href="#editfam"/></svg>Edit<br>Family</button>
                </div>
                <h2>Mode</h2>
            </section>
            <section class="panel context">
                <div class="panel-body centered">
                    <button class="tall off"><svg class="big"><use href="#fab"/></svg>Design to<br>Fabrication</button>
                </div>
                <h2>Fabrication</h2>
            </section>
            <section class="panel context">
                <div class="panel-body centered">
                    <button class="tall"><svg class="big"><use href="#inspector"/></svg>System<br>Inspector</button>
                </div>
                <h2>Analysis</h2>
            </section>
        </div>

        <div class="options">
            <span class="mode">Modify | Air Terminals</span>
            <label for="flow">Flow:</label>
            <input type="text" id="flow" value="235.0 L/s">
        </div>

        <main class="work">
            <aside class="palette">
                <div class="palette-head">
                    <h2>Properties</h2>
                    <button aria-label="Close palette"><svg class="cross"><use href="#x"/></svg></button>
                </div>
                <button class="type">
                    <span class="thumb"><svg width="22" height="14"><path d="M1 7l10-6 10 6-10 6z" fill="#6b6b6b"/><path d="M1 7l10-6 10 6-10-2z" fill="#8b8b8b"/><path d="M7 6l4-2 4 2-4 2.500z" fill="#4c4c4c"/></svg></span>
                    <span class="type-name">M_Supply Diffuser<br>600 x 600 Face 300 x 300 Connection</span>
                    <svg class="tri"><use href="#down"/></svg>
                </button>
                <div class="filter">
                    <div class="pick">
                        <select aria-label="Category"><option>Air Terminals (1)</option></select>
                        <svg class="chev"><use href="#chev"/></svg>
                    </div>
                    <button class="edit-type"><svg class="ic"><use href="#typeprops"/></svg>Edit Type</button>
                </div>
                <div class="grid">
                    <table>
                        <colgroup><col class="c-name"><col class="c-value"><col class="c-btn"></colgroup>
                        <tbody>
                            <tr class="group"><th colspan="2">Constraints</th><th><svg class="fold"><use href="#fold"/></svg></th></tr>
                            <tr><td><label for="level">Level</label></td><td class="edit"><input type="text" id="level" value="Level 1"></td><td></td></tr>
                            <tr><td>Elevation from Level</td><td>3000.0</td><td></td></tr>
                            <tr class="ro"><td>Host</td><td>Level : Level 1</td><td></td></tr>
                            <tr><td>Offset from Host</td><td>3000.0</td><td></td></tr>
                            <tr class="group"><th colspan="2">Dimensions</th><th><svg class="fold"><use href="#fold"/></svg></th></tr>
                            <tr class="ro"><td>Size</td><td>300x300</td><td></td></tr>
                            <tr class="group"><th colspan="2">Mechanical</th><th><svg class="fold"><use href="#fold"/></svg></th></tr>
                            <tr><td><label for="up">UpArrow</label></td><td><input type="checkbox" id="up" checked></td><td><button class="assoc" aria-label="Associate UpArrow"></button></td></tr>
                            <tr><td><label for="right">RightArrow</label></td><td><input type="checkbox" id="right" checked></td><td><button class="assoc" aria-label="Associate RightArrow"></button></td></tr>
                            <tr><td><label for="left">LeftArrow</label></td><td><input type="checkbox" id="left" checked></td><td><button class="assoc" aria-label="Associate LeftArrow"></button></td></tr>
                            <tr><td><label for="dn">DownArrow</label></td><td><input type="checkbox" id="dn" checked></td><td><button class="assoc" aria-label="Associate DownArrow"></button></td></tr>
                            <tr class="ro"><td>System Classification</td><td>Supply Air</td><td></td></tr>
                            <tr class="ro"><td>System Type</td><td>Supply Air</td><td></td></tr>
                            <tr class="ro"><td>System Name</td><td>Mechanical Supply Air 2</td><td></td></tr>
                            <tr class="ro"><td>System Abbreviation</td><td></td><td></td></tr>
                            <tr class="space"><td>Space</td><td>Space name</td><td></td></tr>
                            <tr class="group"><th colspan="2">Mechanical - Flow</th><th><svg class="fold"><use href="#fold"/></svg></th></tr>
                            <tr><td>Pressure Drop</td><td>14.000000 Pa</td><td><button class="assoc" aria-label="Associate Pressure Drop"></button></td></tr>
                            <tr><td>Flow</td><td>235.00 L/s</td><td><button class="assoc" aria-label="Associate Flow"></button></td></tr>
                            <tr class="group"><th colspan="2">Identity Data</th><th><svg class="fold"><use href="#fold"/></svg></th></tr>
                            <tr><td>Image</td><td></td><td></td></tr>
                            <tr><td>Comments</td><td></td><td><button class="assoc" aria-label="Associate Comments"></button></td></tr>
                            <tr><td>Mark</td><td>1</td><td></td></tr>
                            <tr class="group"><th colspan="2">Phasing</th><th><svg class="fold"><use href="#fold"/></svg></th></tr>
                            <tr><td>Phase Created</td><td>New Construction</td><td></td></tr>
                            <tr><td>Phase Demolished</td><td>None</td><td></td></tr>
                        </tbody>
                    </table>
                </div>
                <div class="palette-foot">
                    <a href="#help">Properties help</a>
                    <button disabled>Apply</button>
                </div>
            </aside>

            <section class="view">
                <div class="view-tabs">
                    <button class="view-tab idle"><svg class="ic faded"><use href="#section"/></svg>Section 1</button>
                    <button class="list" aria-label="View list"><svg class="ic"><use href="#custom"/></svg></button>
                </div>
                <div class="view-body">
                    <div class="canvas">
                        <svg class="drawing">
                            <g transform="translate(-320 -198)">
                                <path d="M346 359h372v308H346z" fill="#d9ffd9"/>
                                <path d="M331.500 359v308M733.500 359v308" stroke="#a3a3a3"/>
                                <path d="M320 358.500h107M464 358.500h49M550 358.500h123M710 358.500h35M320 667.500h107M464 667.500h49M550 667.500h123M710 667.500h35M320 435.500h144M464 435.500h49M550 435.500h123M710 435.500h35" stroke="#000"/>
                                <path d="M346.500 359v308M717.500 359v308M427 358.500h37M513 358.500h37M673 358.500h37M427 667.500h37M513 667.500h37M673 667.500h37" stroke="#ed1558"/>
                                <path d="M416.500 435.500l11-8h24l11.500 8z" fill="#3f8ab2" stroke="#1b5fa8"/>
                                <g stroke="#0030d8">
                                    <use href="#flexSection"/>
                                    <use href="#flexSection" transform="translate(1064 0) scale(-1 1)"/>
                                    <path d="M602.500 435.500l11-8h24l11 8M519 381.500h28M513 412.500h39M513 385.500h38M513 408.500h38M520.500 385.500h24v23h-24zM520.500 385.500l24 23M544.500 385.500l-24 23" fill="none"/>
                                </g>
                                <text x="484" y="525" class="room">Space</text>
                                <path d="M470.500 551.500h124v47h-124z" fill="none" stroke="#000"/>
                                <text x="522" y="586" class="room">1</text>
                            </g>
                        </svg>
                        <div class="navbar">
                            <svg class="knob"><use href="#knob"/></svg>
                            <button aria-label="Steering wheel"><svg class="wheel"><use href="#wheel"/></svg><span>2D</span></button>
                            <svg class="tri"><use href="#down"/></svg>
                            <hr>
                            <button aria-label="Zoom region"><svg class="ic"><use href="#zoomreg"/></svg></button>
                            <svg class="tri"><use href="#down"/></svg>
                            <svg class="knob last"><use href="#knob2"/></svg>
                        </div>
                    </div>
                    <div class="vscroll"><svg class="chev flip"><use href="#chev"/></svg><span class="thumb-v"></span><svg class="chev"><use href="#chev"/></svg></div>
                </div>
                <div class="view-bar">
                    <button class="ratio">1 : 100</button>
                    <button aria-label="Detail level"><svg><use href="#v-detail"/></svg></button>
                    <button aria-label="Visual style"><svg><use href="#v-style"/></svg></button>
                    <button aria-label="Sun path"><svg><use href="#v-sun"/></svg></button>
                    <button aria-label="Shadows"><svg><use href="#v-shadow"/></svg></button>
                    <button aria-label="Crop view"><svg><use href="#v-crop"/></svg></button>
                    <button aria-label="Show crop region"><svg><use href="#v-cropshow"/></svg></button>
                    <button aria-label="Temporary hide"><svg><use href="#v-glasses"/></svg></button>
                    <button aria-label="Reveal hidden"><svg><use href="#v-reveal"/></svg></button>
                    <button aria-label="Temporary properties"><svg><use href="#v-props"/></svg></button>
                    <button aria-label="Analytical model"><svg><use href="#v-analytic"/></svg></button>
                    <button aria-label="Constraints"><svg><use href="#v-lock"/></svg></button>
                    <div class="hscroll"><svg class="chev left"><use href="#chev"/></svg><span class="thumb-h"></span><svg class="chev right"><use href="#chev"/></svg></div>
                    <svg class="grip"><use href="#grip"/></svg>
                </div>
            </section>

            <section class="view">
                <div class="view-tabs">
                    <button class="view-tab"><svg class="ic"><use href="#sheet"/></svg>1 - Mech<svg class="cross"><use href="#x"/></svg></button>
                    <button class="list" aria-label="View list"><svg class="ic"><use href="#custom"/></svg></button>
                </div>
                <div class="view-body">
                    <div class="canvas">
                        <svg class="drawing">
                            <g transform="translate(-767 -198)">
                                <path d="M815.500 336.500h334v333h-334z" fill="#fff" stroke="#a3a3a3"/>
                                <path d="M828.500 349.500h308v307h-308z" fill="#d9ffd9" stroke="#ed1558"/>

                                <!-- section mark -->
                                <path d="M857 206l54.500 54.500L857 315z" fill="#003cb8"/>
                                <circle cx="857.500" cy="260.500" r="38" fill="#fff" stroke="#003cb8"/>
                                <path d="M819 260.500h77" stroke="#003cb8"/>
                                <text x="858" y="248" class="mark">-</text>
                                <text x="858" y="280" class="mark">---</text>
                                <path d="M857.500 314v398" stroke="#000"/>
                                <path d="M857 711h59v13h-59z"/>

                                <text x="941" y="475" class="room plan">Space</text>
                                <text x="973" y="525" class="room plan">1</text>
                                <path d="M930.500 497.500h102v39h-102z" fill="none" stroke="#000"/>

                                <!-- ducts -->
                                <g stroke="#0026d9" fill="none">
                                    <path d="M895.500 486.500h20v32h-20zM895.500 491.500h20M895.500 514.500h20M916.500 493.500h119v19h-119zM1035.500 493.500l8-3M1035.500 512.500l8 3M1043.500 490.500h32v25h-32zM1075 490.500h92M1075 515.500h92"/>
                                    <path d="M1046.500 490v-4l3-7h20l3 7v4M1046.500 486.500h26M1046.500 516v3l3 7.500h20l3-7.500v-3M1046.500 518.500h26"/>
                                    <path d="M896 443.500h19M896 452.500h19M896 460.500h19M896 469.500h19M896 478.500h19M896 527.500h19M896 536.500h19M896 544.500h19M896 553.500h19M896 562.500h19"/>
                                    <path d="M1050 443.500h19M1050 452.500h19M1050 461.500h19M1050 470.500h19M1050 535.500h19M1050 544.500h19M1050 553.500h19M1050 562.500h19"/>
                                </g>
                                <g transform="translate(905.500 425.500)" stroke="#005b9e" fill="#005b9e">
                                    <use href="#diffuser"/><path d="M-2-2h4v4h-4z"/>
                                    <path d="M-10-10h20v20h-20zM-7-7H7V7H-7zM0-7V7M-9 0H9" fill="none" stroke="#0026d9"/>
                                    <use href="#airArrow"/><use href="#airArrow" transform="rotate(90)"/><use href="#airArrow" transform="rotate(180)"/><use href="#airArrow" transform="rotate(270)"/>
                                </g>
                                <g transform="translate(1059.500 425.500)" stroke="#0026d9" fill="#0026d9">
                                    <use href="#diffuser"/>
                                    <use href="#airArrow"/><use href="#airArrow" transform="rotate(90)"/><use href="#airArrow" transform="rotate(180)"/><path d="M-25 0h-31"/>
                                </g>
                                <g transform="translate(905.500 579.500)" stroke="#0026d9" fill="#0026d9">
                                    <use href="#diffuser"/>
                                    <use href="#airArrow"/><use href="#airArrow" transform="rotate(90)"/><use href="#airArrow" transform="rotate(180)"/><use href="#airArrow" transform="rotate(270)"/>
                                </g>
                                <g transform="translate(1059.500 579.500)" stroke="#0026d9" fill="#0026d9">
                                    <use href="#diffuser"/>
                                    <use href="#airArrow"/><use href="#airArrow" transform="rotate(90)"/><use href="#airArrow" transform="rotate(180)"/><use href="#airArrow" transform="rotate(270)"/>
                                </g>

                                <!-- temporary dimensions -->
                                <path d="M905 318.500h232M905.500 312v40M1136.500 312v26M901 323l9-9M1132 323l9-9M1008 344l6 6" stroke="#86a9ff" fill="none"/>
                                <path d="M1013 347v73" stroke="#a9c4f4" stroke-width="2"/>
                                <path d="M915 426h80" stroke="#86a4ec" stroke-width="2"/>
                                <path d="M1014.500 328v10M1027.500 328v10M1015 332.500h12M1019.500 383v10M1032.500 383v10M1020 387.500h12" stroke="#003cb8"/>
                                <path d="M998 425.500h7" stroke="#0a3fc0" stroke-width="4"/>
                                <g fill="#6fa8f0" stroke="#4d6890">
                                    <circle cx="905.500" cy="328.500" r="3"/><circle cx="1136.500" cy="328.500" r="3"/><circle cx="1017.500" cy="349.500" r="3"/><circle cx="996.500" cy="425.500" r="3"/>
                                </g>
                                <path d="M1004.500 419.500h13v13h-13z" fill="#f1f1e6" stroke="#7a6a4a"/>
                                <path d="M1005 420l12 12M1017 420l-12 12" stroke="#7a6a4a"/>
                                <text x="1003" y="312" class="dim">3600.0</text>
                                <text transform="translate(1006 403) rotate(-90)" class="dim up">1200.0</text>
                                <text x="979" y="455" class="dim grey">300.0 x 300.0</text>
                                <path d="M1006 473h4v6h-4zM1011 473h2v6h-2z" fill="#8c9a8c"/>
                            </g>
                        </svg>
                        <div class="navbar">
                            <svg class="knob"><use href="#knob"/></svg>
                            <button aria-label="Steering wheel"><svg class="wheel"><use href="#wheel"/></svg><span>2D</span></button>
                            <svg class="tri"><use href="#down"/></svg>
                            <hr>
                            <button aria-label="Zoom region"><svg class="ic"><use href="#zoomreg"/></svg></button>
                            <svg class="tri"><use href="#down"/></svg>
                            <svg class="knob last"><use href="#knob2"/></svg>
                        </div>
                    </div>
                    <div class="vscroll"><svg class="chev flip"><use href="#chev"/></svg><span class="thumb-v"></span><svg class="chev"><use href="#chev"/></svg></div>
                </div>
                <div class="view-bar">
                    <button class="ratio">1 : 100</button>
                    <button aria-label="Detail level"><svg><use href="#v-detail"/></svg></button>
                    <button aria-label="Visual style"><svg><use href="#v-style"/></svg></button>
                    <button aria-label="Sun path"><svg><use href="#v-sun"/></svg></button>
                    <button aria-label="Shadows"><svg><use href="#v-shadow"/></svg></button>
                    <button aria-label="Crop view"><svg><use href="#v-crop"/></svg></button>
                    <button aria-label="Show crop region"><svg><use href="#v-cropshow"/></svg></button>
                    <button aria-label="Temporary hide"><svg><use href="#v-glasses"/></svg></button>
                    <button aria-label="Reveal hidden"><svg><use href="#v-reveal"/></svg></button>
                    <button aria-label="Temporary properties"><svg><use href="#v-props"/></svg></button>
                    <button aria-label="Analytical model"><svg><use href="#v-lit"/></svg></button>
                    <button aria-label="Constraints"><svg><use href="#v-lock"/></svg></button>
                    <div class="hscroll"><svg class="chev left"><use href="#chev"/></svg><span class="thumb-h"></span><svg class="chev right"><use href="#chev"/></svg></div>
                    <svg class="grip"><use href="#grip"/></svg>
                </div>
            </section>
        </main>

        <footer class="status">
            <span class="hint">Click to select, TAB for alternate</span>
            <button aria-label="Worksets"><svg class="ic"><use href="#s-work"/></svg></button>
            <div class="pick"><select aria-label="Active workset"><option></option></select><svg class="chev"><use href="#chev"/></svg></div>
            <button class="count"><svg class="ic"><use href="#s-edit"/></svg>:0</button>
            <button class="opt" aria-label="Design options"><svg class="ic"><use href="#s-opt"/></svg></button>
            <button aria-label="Add to set"><svg class="ic"><use href="#s-add"/></svg></button>
            <div class="pick"><select aria-label="Design option"><option>Main Model</option></select><svg class="chev"><use href="#chev"/></svg></div>
            <div class="select-tools">
                <button aria-label="Select links"><svg class="ic"><use href="#s-link"/></svg></button>
                <button aria-label="Select underlay"><svg class="ic"><use href="#s-under"/></svg></button>
                <button aria-label="Select pinned"><svg class="ic"><use href="#s-pin"/></svg></button>
                <button aria-label="Select by face"><svg class="ic"><use href="#s-face"/></svg></button>
                <button aria-label="Drag on selection"><svg class="ic"><use href="#s-drag"/></svg></button>
                <button aria-label="Background processes"><svg class="ic"><use href="#s-busy"/></svg></button>
                <button class="count"><svg class="ic"><use href="#s-filter"/></svg>:1</button>
            </div>
        </footer>

        <!-- callouts -->
        <svg class="callouts" aria-hidden="true">
            <g fill="none" stroke="#ed1c24" stroke-width="4">
                <rect x="5" y="198" width="310" height="71"/>
                <rect x="4" y="581" width="298" height="20"/>
                <path d="M420 425L312 286M470 518L320 585" stroke-linecap="round"/>
            </g>
            <path d="M299 271l22 11-16 12zM303 592l18-18 8 18z" fill="#ed1c24"/>
        </svg>
    </div>

</body>
</html>
```
FILE: styles.css
```css
* {
    box-sizing: border-box;
}

body {
    margin: 0;
    font-family: Roboto, "Open Sans", sans-serif;
    font-size: 12px;
    color: #2d2d2d;
    background: #cbcbcb;
}

h1, h2 {
    margin: 0;
    font-size: 12px;
    font-weight: normal;
}

button {
    display: flex;
    align-items: center;
    justify-content: center;
    padding: 0;
    border: none;
    background: none;
    font: inherit;
    color: inherit;
    white-space: nowrap;
}

svg {
    display: block;
    flex: none;
}

.sprite {
    position: absolute;
    width: 0;
    height: 0;
}

.app {
    position: relative;
    display: flex;
    flex-direction: column;
    height: 100vh;
    overflow: hidden;
}

.ic {
    width: 18px;
    height: 18px;
}

.big {
    width: 32px;
    height: 32px;
}

.tri, .drop svg {
    width: 8px;
    height: 5px;
}

.chev {
    width: 10px;
    height: 6px;
}

.cross {
    width: 12px;
    height: 12px;
}

.on {
    background: #b9d8f3;
    box-shadow: inset 0 0 0 1px #1a6fc4;
}

.off {
    color: #a3a3a3;
}

/* title bar */
.titlebar {
    display: flex;
    align-items: center;
    height: 34px;
    padding: 0 7px 0 4px;
}

.quick, .account, .window-btns {
    display: flex;
    align-items: center;
}

.qbtn {
    width: 24px;
    height: 22px;
}

.qbtn.wide {
    width: 29px;
}

.qbtn.spaced {
    margin-left: 5px;
}

.letter {
    font-size: 20px;
    font-weight: bold;
}

.drop {
    width: 12px;
    height: 22px;
}

.turned svg {
    transform: rotate(90deg);
}

.sep {
    width: 1px;
    height: 20px;
    margin: 0 3px;
    background: #b2b2b2;
}

.doc-title {
    flex: 1;
    padding: 0 0 4px 32px;
    text-align: center;
    white-space: nowrap;
}

.account {
    margin-left: 40px;
}

.user {
    gap: 4px;
    margin-left: 3px;
}

.window-btns {
    margin-left: 53px;
}

.window-btns button {
    width: 25px;
    height: 22px;
}

.min {
    width: 8px;
    height: 2px;
    margin-top: 10px;
    background: #2d2d2d;
}

.max {
    width: 12px;
    height: 11px;
    border: 1px solid #2d2d2d;
    border-top-width: 2px;
}

/* tabs */
.tabs {
    display: flex;
    height: 20px;
    padding-left: 4px;
}

.tabs button {
    padding: 0 9px 0 10px;
}

.tabs .file {
    width: 45px;
    margin-right: 3px;
    background: #2a7ab0;
    color: #fff;
}

.tabs .tab-tool {
    padding: 0 0 0 7px;
}

/* ribbon */
.ribbon {
    display: grid;
    grid-template-columns: 57px 63px 79px 138px 237px 64px 55px 80px 48px 69px 57px;
    column-gap: 1px;
    height: 96px;
    margin: 0 3px 0 4px;
    padding-top: 1px;
    background: #e6efd8;
    border-bottom: 1px solid #c6c9c2;
}

.panel {
    display: flex;
    flex-direction: column;
    background: #eee;
}

.panel-body {
    flex: 1;
    padding-top: 2px;
}

.panel h2 {
    display: flex;
    align-items: center;
    justify-content: center;
    gap: 6px;
    height: 19px;
    padding-bottom: 2px;
}

.context h2 {
    margin: 0 1px;
    background: #e6efd8;
}

.context.first {
    margin-left: 3px;
}

.centered, .stack {
    display: flex;
    justify-content: center;
}

.stack {
    flex-direction: column;
    justify-content: flex-start;
    align-items: center;
}

.cell {
    width: 38px;
    height: 36px;
}

.tall {
    flex-direction: column;
    justify-content: flex-start;
    width: 44px;
    height: 72px;
    padding-top: 2px;
    line-height: 15px;
}

.tall .big {
    margin-bottom: 5px;
}

.small {
    width: 24px;
    height: 24px;
}

.clip {
    display: grid;
    grid-template-columns: 44px 24px;
    grid-template-rows: repeat(3, 24px);
    column-gap: 4px;
    padding-left: 5px;
}

.clip .tall {
    grid-row: span 3;
}

.geo {
    display: grid;
    grid-template-columns: 69px 24px 25px 12px;
    grid-template-rows: repeat(3, 24px);
    padding-left: 5px;
}

.labelled {
    justify-content: flex-start;
    gap: 4px;
}

.labelled .tri {
    margin-left: 2px;
}

.mod {
    display: flex;
    gap: 2px;
    padding-left: 2px;
}

.mod-big {
    display: grid;
    grid-template-columns: repeat(4, 39px);
    grid-template-rows: repeat(2, 36px);
}

.mod-small {
    display: grid;
    grid-template-columns: repeat(3, 25px);
    grid-template-rows: repeat(3, 24px);
}

.viewp {
    display: grid;
    grid-template-columns: 24px 10px 24px;
    grid-template-rows: repeat(3, 24px);
    padding-left: 2px;
}

.meas {
    display: grid;
    grid-template-columns: 38px 12px;
    grid-template-rows: repeat(2, 36px);
    align-items: center;
    padding-left: 1px;
}

.crea {
    display: grid;
    grid-template-columns: repeat(2, 38px);
    grid-template-rows: repeat(2, 36px);
    padding-left: 2px;
}

/* options bar */
.options {
    display: flex;
    align-items: center;
    height: 26px;
    margin: 0 2px 0 4px;
    background: #e6efd8;
    color: #000;
}

.mode {
    width: 151px;
    padding-left: 8px;
    border-right: 1px solid #999;
    line-height: 22px;
    color: #a7aba2;
    text-shadow: 1px 1px 0 #fff;
}

.options label {
    width: 44px;
    padding-left: 13px;
}

.options input {
    width: 120px;
    height: 22px;
    padding: 0 5px;
    border: 1px solid #777;
    font: inherit;
}

/* work area */
.work {
    display: grid;
    grid-template-columns: 313px 444fr 418fr;
    gap: 3px;
    flex: 1;
    min-height: 0;
    margin: 2px 3px 0 4px;
}

.palette {
    display: flex;
    flex-direction: column;
    min-height: 0;
    background: #eee;
}

.palette-head {
    display: flex;
    align-items: center;
    justify-content: space-between;
    height: 20px;
    padding: 0 5px 0 3px;
}

.type {
    justify-content: flex-start;
    height: 73px;
    padding: 0 5px 0 4px;
    text-align: left;
    line-height: 16px;
}

.thumb {
    display: flex;
    align-items: center;
    justify-content: center;
    width: 66px;
    height: 66px;
    background: #fff;
    border: 1px solid #ccc;
}

.type-name {
    flex: 1;
    padding-left: 4px;
}

.filter {
    display: flex;
    align-items: center;
    height: 24px;
    padding-left: 1px;
    color: #000;
}

.pick {
    display: flex;
    align-items: center;
}

.pick select {
    appearance: none;
    width: 227px;
    height: 22px;
    padding: 0 3px;
    border: 1px solid #adadad;
    border-radius: 0;
    background: #e1e1e1;
    font: inherit;
    color: #000;
}

.pick .chev {
    margin-left: -14px;
    margin-right: 4px;
}

.edit-type {
    gap: 4px;
    margin-left: 5px;
    padding-bottom: 3px;
}

.grid {
    flex: 1;
    min-height: 0;
    margin: 0 3px 0 1px;
    background: #fff;
    overflow: hidden;
}

.grid table {
    width: 100%;
    table-layout: fixed;
    border-collapse: separate;
    border-spacing: 0;
    color: #000;
}

.c-name {
    width: 149px;
}

.c-btn {
    width: 13px;
}

.grid td, .grid th {
    height: 18px;
    padding: 0 0 0 8px;
    line-height: 17px;
    border-bottom: 1px dotted #8a8a8a;
    text-align: left;
    font-weight: normal;
    white-space: nowrap;
}

.grid td + td {
    padding-left: 2px;
    border-left: 1px dotted #8a8a8a;
}

.grid td:last-child {
    padding: 0;
    border-right: 1px dotted #8a8a8a;
}

.grid .group th {
    padding-left: 2px;
    background: #dcdcdc;
    border-color: #dcdcdc;
}

.grid .group th + th {
    padding: 0;
}

.fold {
    width: 8px;
    height: 10px;
}

.ro td {
    color: #7a7a7a;
}

.grid .edit {
    padding: 0;
}

.edit input {
    display: block;
    width: 100%;
    height: 17px;
    padding: 0 2px;
    border: 1px solid #000;
    font: inherit;
}

.grid input[type="checkbox"] {
    appearance: none;
    display: flex;
    justify-content: center;
    width: 13px;
    height: 13px;
    margin: 3px 1px 1px;
    border: 1px solid #333;
    background: #fff;
}

.grid input[type="checkbox"]::after {
    content: "";
    width: 4px;
    height: 8px;
    border: solid #333;
    border-width: 0 1px 1px 0;
    transform: rotate(42deg);
}

.assoc {
    width: 10px;
    height: 17px;
    margin-left: 1px;
    background: #dedede;
    border-right: 2px solid #ababab;
    border-bottom: 1px solid #ababab;
}

.grid .space td {
    color: #ed1c24;
    font-family: "Open Sans", "Noto Sans", sans-serif;
    font-size: 16px;
    font-weight: bold;
}

.palette-foot {
    display: flex;
    align-items: center;
    justify-content: space-between;
    height: 28px;
    padding: 0 5px 2px 3px;
}

.palette-foot a {
    color: #0563c1;
}

.palette-foot button {
    width: 73px;
    height: 21px;
    border: 1px solid #bfbfbf;
    background: #ccc;
    color: #8c8c8c;
}

/* views */
.view {
    display: flex;
    flex-direction: column;
    min-width: 0;
    min-height: 0;
    background: #f0f0f0;
}

.view-tabs {
    display: flex;
    justify-content: space-between;
    height: 20px;
    background: #cbcbcb;
}

.view-tab {
    justify-content: flex-start;
    gap: 7px;
    width: 127px;
    padding: 0 4px 0 3px;
    background: #fff;
    font-weight: bold;
}

.view-tab .cross {
    margin-left: auto;
}

.view-tab.idle {
    background: #eee;
    padding-left: 1px;
    font-weight: normal;
}

.faded {
    opacity: .5;
}

.list {
    width: 20px;
}

.view-body {
    display: flex;
    flex: 1;
    min-height: 0;
}

.canvas {
    position: relative;
    flex: 1;
    overflow: hidden;
    background: #fff;
}

.drawing {
    width: 100%;
    height: 100%;
}

.room {
    font: 33px "Liberation Sans", sans-serif;
}

.room.plan {
    font-size: 27px;
}

.mark {
    font: bold 16px "Liberation Sans", sans-serif;
    fill: #003cb8;
    text-anchor: middle;
}

.dim {
    font: 11px "Liberation Sans", sans-serif;
    fill: #003cb8;
}

.dim.up {
    font-size: 12px;
}

.dim.grey {
    fill: #5f6b5f;
}

.navbar {
    position: absolute;
    top: 2px;
    right: 0;
    display: flex;
    flex-direction: column;
    align-items: center;
    width: 36px;
    height: 118px;
    padding: 1px 2px;
    border: 2px solid #bcbcbc;
    border-radius: 6px;
    background: #f4f4f4;
}

.navbar button {
    position: relative;
    height: 26px;
}

.navbar span {
    position: absolute;
    right: 0;
    bottom: 0;
    color: #4d86b8;
    font-size: 11px;
    font-weight: bold;
    line-height: 10px;
}

.navbar .tri {
    margin-top: 4px;
    opacity: .6;
}

.navbar hr {
    width: 26px;
    margin: 4px 0 2px;
    border: none;
    border-top: 1px solid #bcbcbc;
}

.wheel {
    width: 28px;
    height: 28px;
}

.knob {
    align-self: flex-end;
    width: 8px;
    height: 8px;
    margin-bottom: 10px;
}

.knob.last {
    margin: auto 0 1px;
}

.vscroll {
    display: flex;
    flex-direction: column;
    align-items: center;
    justify-content: space-between;
    width: 18px;
    padding: 8px 3px 6px 0;
    background: #f0f0f0;
}

.flip {
    transform: rotate(180deg);
}

.thumb-v {
    width: 15px;
    height: 17px;
    background: #cdcdcd;
}

.view-bar {
    display: flex;
    align-items: center;
    height: 19px;
    padding-bottom: 2px;
}

.view-bar button {
    width: 21px;
}

.view-bar button svg {
    width: 16px;
    height: 16px;
}

.view-bar .ratio {
    width: 77px;
    padding-left: 5px;
    color: #000;
}

.hscroll {
    display: flex;
    flex: 1;
    align-items: center;
    justify-content: space-between;
    padding: 0 10px 0 3px;
}

.left {
    transform: rotate(90deg);
}

.right {
    transform: rotate(-90deg);
}

.thumb-h {
    width: 17px;
    height: 15px;
    background: #cdcdcd;
}

.grip {
    width: 10px;
    height: 10px;
    margin: 7px 3px 0 0;
}

/* status bar */
.status {
    display: flex;
    align-items: center;
    height: 27px;
    padding: 0 58px 2px 5px;
    color: #000;
}

.hint {
    min-width: 170px;
    white-space: nowrap;
}

.status button {
    width: 25px;
    gap: 1px;
}

.status .count {
    width: 34px;
    margin-left: 6px;
}

.status .pick select {
    width: 204px;
    height: 19px;
    border: none;
    background: #fff;
    color: #8a8a8a;
}

.status .pick .chev {
    opacity: .6;
}

.status .opt {
    margin-left: 18px;
}

.status .pick + .select-tools {
    display: flex;
    margin-left: auto;
}

.status .opt + button {
    margin-right: 4px;
}

.select-tools .count {
    margin-left: 0;
}

/* callouts drawn over the window */
.callouts {
    position: absolute;
    top: 0;
    left: 0;
    width: 100%;
    height: 100%;
    pointer-events: none;
}
```
